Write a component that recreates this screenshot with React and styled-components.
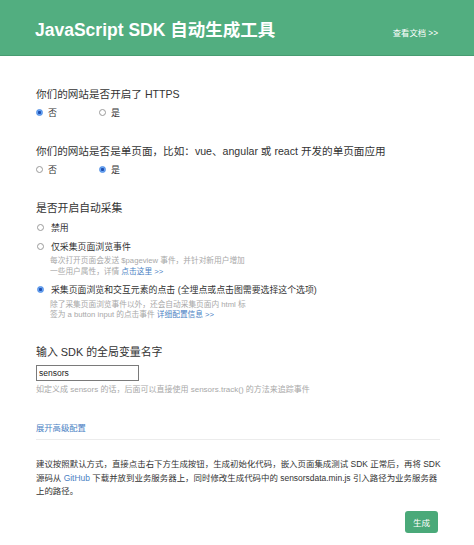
import React, { useState } from 'react';
import styled, { createGlobalStyle } from 'styled-components';

const GlobalStyle = createGlobalStyle`
  body {
    margin: 0;
    background: #fff;
    font-family: "Liberation Sans", "Noto Sans CJK SC", sans-serif;
    color: #333;
  }
`;

const Header = styled.header`
  height: 55px;
  background: #52ae80;
  border-bottom: 1px solid #479c71;
  display: flex;
  align-items: center;
  justify-content: space-between;
  padding: 0 36px 0 35px;
`;

const Title = styled.h1`
  margin: 4px 0 0;
  font-size: 17.5px;
  font-weight: bold;
  color: #fff;
  line-height: 20px;
`;

const DocLink = styled.a`
  margin-top: 8px;
  font-size: 8.3px;
  color: #fff;
  text-decoration: none;
`;

const Content = styled.main`
  padding: 31px 34px 0 36px;
`;

const Section = styled.section`
  margin-bottom: ${p => p.gap ?? 25}px;
`;

const Question = styled.div`
  font-size: ${p => p.size ?? 10.6}px;
  line-height: ${p => p.lh ?? 14}px;
  color: #333;
`;

const RadioRow = styled.div`
  display: flex;
  margin-top: 4px;
  height: 14px;
  align-items: center;
`;

const InlineOption = styled.label`
  display: flex;
  align-items: center;
  width: 63px;
  font-size: 9px;
  color: #333;
`;

const Radio = styled.input.attrs({ type: 'radio' })`
  appearance: none;
  margin: 0 5px 0 0;
  width: 7px;
  height: 7px;
  border-radius: 50%;
  border: 1px solid #9a9a9a;
  background: #fff;
  flex: none;
  &:checked {
    border-color: #4f8ee6;
    background: radial-gradient(circle, #1f4fb0 0 1.3px, #6aa6f4 1.8px);
  }
`;

const OptionList = styled.div`
  display: flex;
  flex-direction: column;
  gap: 5px;
  margin-top: 5px;
`;

const Option = styled.div`
  display: flex;
  flex-direction: column;
`;

const OptionLabel = styled.label`
  display: flex;
  align-items: center;
  height: 14px;
  font-size: 8.9px;
  color: #333;
  ${Radio} {
    margin-right: 7px;
    margin-left: 1px;
  }
`;

const OptionDesc = styled.div`
  padding-left: 14px;
  margin-top: 3px;
  font-size: 7.7px;
  line-height: 10.8px;
  color: #a8a8a8;
`;

const Link = styled.a`
  color: #4a7fc4;
  text-decoration: none;
`;

const TextInput = styled.input`
  box-sizing: border-box;
  display: block;
  margin-top: 5px;
  width: 103px;
  height: 16px;
  border: 1px solid #7a7a7a;
  padding: 0 2px;
  font-family: inherit;
  font-size: 8.5px;
  color: #222;
  outline: none;
`;

const Help = styled.div`
  margin-top: 3px;
  font-size: 8px;
  line-height: 11px;
  color: #a8a8a8;
`;

const Expand = styled.a`
  display: block;
  margin-top: 27px;
  font-size: 8.3px;
  line-height: 12px;
  color: #4a7fc4;
  text-decoration: none;
`;

const Divider = styled.hr`
  margin: 5px 0 0;
  border: none;
  border-top: 1px solid #ececec;
`;

const Note = styled.p`
  margin: 18px 0 0;
  font-size: 8.45px;
  line-height: 13.5px;
  color: #333;
  white-space: nowrap;
`;

const Actions = styled.div`
  display: flex;
  justify-content: flex-end;
  margin-top: 12px;
  padding-right: 2px;
`;

const Button = styled.button`
  width: 33px;
  height: 22px;
  border: none;
  border-radius: 3px;
  background: #4aa979;
  color: #fff;
  font-family: inherit;
  font-size: 8.5px;
  padding: 0;
  cursor: pointer;
`;

const autoOptions = [
  { id: 'off', label: '禁用' },
  {
    id: 'pv',
    label: '仅采集页面浏览事件',
    desc: (
      <>
        每次打开页面会发送 $pageview 事件，并针对新用户增加
        <br />
        一些用户属性，详情 <Link href="#">点击这里 &gt;&gt;</Link>
      </>
    ),
  },
  {
    id: 'click',
    label: '采集页面浏览和交互元素的点击 (全埋点或点击图需要选择这个选项)',
    desc: (
      <>
        除了采集页面浏览事件以外，还会自动采集页面内 html 标
        <br />
        签为 a button input 的点击事件 <Link href="#">详细配置信息 &gt;&gt;</Link>
      </>
    ),
  },
];

const App = () => {
  const [https, setHttps] = useState('no');
  const [spa, setSpa] = useState('yes');
  const [auto, setAuto] = useState('click');
  const [name, setName] = useState('sensors');

  return (
    <>
      <GlobalStyle />
      <Header>
        <Title>JavaScript SDK 自动生成工具</Title>
        <DocLink href="#">查看文档 &gt;&gt;</DocLink>
      </Header>
      <Content>
        <Section>
          <Question>你们的网站是否开启了 HTTPS</Question>
          <RadioRow>
            <InlineOption>
              <Radio name="https" checked={https === 'no'} onChange={() => setHttps('no')} />否
            </InlineOption>
            <InlineOption>
              <Radio name="https" checked={https === 'yes'} onChange={() => setHttps('yes')} />是
            </InlineOption>
          </RadioRow>
        </Section>

        <Section>
          <Question>你们的网站是否是单页面，比如：vue、angular 或 react 开发的单页面应用</Question>
          <RadioRow>
            <InlineOption>
              <Radio name="spa" checked={spa === 'no'} onChange={() => setSpa('no')} />否
            </InlineOption>
            <InlineOption>
              <Radio name="spa" checked={spa === 'yes'} onChange={() => setSpa('yes')} />是
            </InlineOption>
          </RadioRow>
        </Section>

        <Section gap={23}>
          <Question size={10.8}>是否开启自动采集</Question>
          <OptionList>
            {autoOptions.map(o => (
              <Option key={o.id}>
                <OptionLabel>
                  <Radio name="auto" checked={auto === o.id} onChange={() => setAuto(o.id)} />
                  {o.label}
                </OptionLabel>
                {o.desc && <OptionDesc>{o.desc}</OptionDesc>}
              </Option>
            ))}
          </OptionList>
        </Section>

        <Section gap={0}>
          <Question size={10.9} lh={16}>输入 SDK 的全局变量名字</Question>
          <TextInput value={name} onChange={e => setName(e.target.value)} />
          <Help>如定义成 sensors 的话，后面可以直接使用 sensors.track() 的方法来追踪事件</Help>
          <Expand href="#">展开高级配置</Expand>
          <Divider />
        </Section>

        <Note>
          建议按照默认方式，直接点击右下方生成按钮，生成初始化代码，嵌入页面集成测试 SDK 正常后，再将 SDK
          <br />
          源码从 <Link href="#">GitHub</Link> 下载并放到业务服务器上，同时修改生成代码中的 sensorsdata.min.js 引入路径为业务服务器
          <br />
          上的路径。
        </Note>
        <Actions>
          <Button>生成</Button>
        </Actions>
      </Content>
    </>
  );
};

export default App;
